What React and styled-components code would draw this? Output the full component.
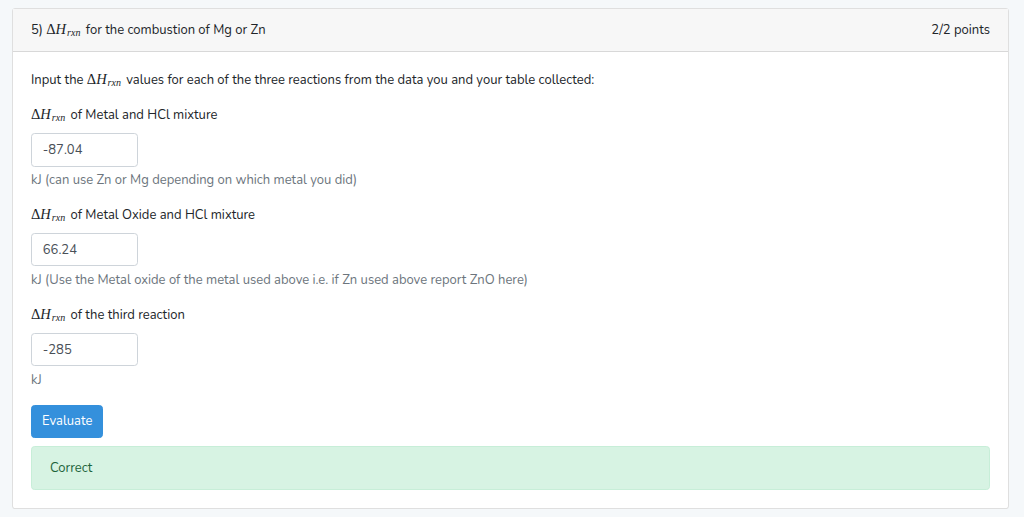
import React from "react";
import styled, { createGlobalStyle } from "styled-components";

const Global = createGlobalStyle`
  html, body { margin: 0; padding: 0; background: #f5f8fa; }
  body {
    font-family: "Nunito", Lato, "Noto Sans", sans-serif;
    font-size: 13px;
    line-height: 1.6;
    color: #212529;
  }
  * { box-sizing: border-box; }
`;

const Page = styled.div`
  padding: 8px 15px 9px 12px;
`;

const Card = styled.div`
  background: #fff;
  border: 1px solid rgba(0, 0, 0, 0.125);
  border-radius: 3.6px;
  display: flex;
  flex-direction: column;
`;

const CardHeader = styled.div`
  display: flex;
  justify-content: space-between;
  align-items: center;
  padding: 10.8px 18px;
  background: #f7f7f7;
  border-bottom: 1px solid rgba(0, 0, 0, 0.125);
  line-height: 20.7px;
`;

const CardBody = styled.div`
  padding: 18px 18px 18px;
`;

const Para = styled.p`
  margin: 0 0 14.4px;
  line-height: 20.7px;
`;

const Group = styled.div`
  margin-bottom: 14.4px;
`;

const Label = styled.label`
  display: block;
  margin-bottom: 7.2px;
  line-height: 20.7px;
`;

const Input = styled.input`
  display: block;
  width: 107px;
  height: 33.3px;
  padding: 5.4px 10.8px;
  font: inherit;
  font-size: 13px;
  color: #495057;
  background: #fff;
  border: 1px solid #ced4da;
  border-radius: 3.6px;
  outline: none;
`;

const Hint = styled.small`
  display: block;
  margin-top: 3.6px;
  font-size: 13px;
  line-height: 20.7px;
  color: #6c757d;
`;

const Button = styled.button`
  display: block;
  height: 33.3px;
  padding: 0 10px;
  font: inherit;
  font-size: 13px;
  line-height: 20.7px;
  color: #fff;
  background: #3490dc;
  border: 1px solid #3490dc;
  border-radius: 3.6px;
  cursor: pointer;
`;

const Alert = styled.div`
  margin-top: 7.5px;
  padding: 10.8px 18px;
  line-height: 20.7px;
  color: #1d643b;
  background: #d7f3e3;
  border: 1px solid #c7eed8;
  border-radius: 3.6px;
`;

const MathWrap = styled.span`
  font-family: "Liberation Serif", "DejaVu Serif", serif;
  font-size: 14.5px;
  line-height: 1;
  white-space: nowrap;
  margin-right: 2px;
`;

const Var = styled.i`
  font-style: italic;
`;

const Sub = styled.sub`
  font-style: italic;
  font-size: 10px;
  vertical-align: -2px;
  line-height: 0;
  margin-left: 1px;
`;

const DH = () => (
  <MathWrap>
    Δ<Var>H</Var>
    <Sub>rxn</Sub>
  </MathWrap>
);

const fields = [
  {
    value: "-87.04",
    label: "of Metal and HCl mixture",
    hint: "kJ (can use Zn or Mg depending on which metal you did)",
  },
  {
    value: "66.24",
    label: "of Metal Oxide and HCl mixture",
    hint: "kJ (Use the Metal oxide of the metal used above i.e. if Zn used above report ZnO here)",
  },
  { value: "-285", label: "of the third reaction", hint: "kJ" },
];

export default function App() {
  return (
    <>
      <Global />
      <Page>
        <Card>
          <CardHeader>
            <span>
              5) <DH /> for the combustion of Mg or Zn
            </span>
            <span>2/2 points</span>
          </CardHeader>
          <CardBody>
            <Para>
              Input the <DH /> values for each of the three reactions from the
              data you and your table collected:
            </Para>
            {fields.map((f, i) => (
              <Group key={i}>
                <Label>
                  <DH /> {f.label}
                </Label>
                <Input defaultValue={f.value} />
                <Hint>{f.hint}</Hint>
              </Group>
            ))}
            <Button>Evaluate</Button>
            <Alert>Correct</Alert>
          </CardBody>
        </Card>
      </Page>
    </>
  );
}
